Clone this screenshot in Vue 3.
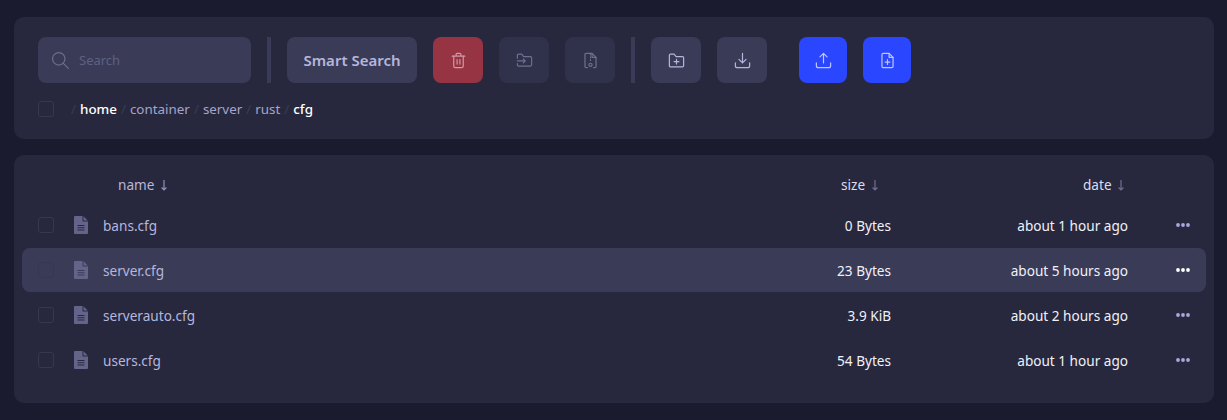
<script setup>
const crumbs = [
  { name: 'home', on: true },
  { name: 'container' },
  { name: 'server' },
  { name: 'rust' },
  { name: 'cfg', on: true }
]

const files = [
  { name: 'bans.cfg', size: '0 Bytes', date: 'about 1 hour ago' },
  { name: 'server.cfg', size: '23 Bytes', date: 'about 5 hours ago', hover: true },
  { name: 'serverauto.cfg', size: '3.9 KiB', date: 'about 2 hours ago' },
  { name: 'users.cfg', size: '54 Bytes', date: 'about 1 hour ago' }
]

const heads = [
  { label: 'name', cls: 'head-name' },
  { label: 'size', cls: 'head-size' },
  { label: 'date', cls: 'head-date' }
]
</script>

<template>
  <div class="page">
    <section class="panel toolbar">
      <div class="actions">
        <label class="search">
          <svg class="search-icon" viewBox="0 0 24 24" fill="none" stroke="currentColor" stroke-width="1.5" stroke-linecap="round">
            <circle cx="10.500" cy="10.500" r="7.500" />
            <path d="M16 16l6 6" />
          </svg>
          <span>Search</span>
        </label>
        <i class="divider"></i>
        <button class="btn smart">Smart Search</button>
        <button class="btn danger">
          <svg viewBox="0 0 24 24" fill="none" stroke="currentColor" stroke-width="1.5" stroke-linecap="round" stroke-linejoin="round">
            <path d="M4 6.500h16M9 6.500V4.200c0-.6.500-1.200 1.200-1.200h3.600c.7 0 1.200.6 1.200 1.200v2.300" />
            <path d="M6 6.500V19c0 1.200.9 2 2 2h8c1.100 0 2-.8 2-2V6.500M10.200 11v5.500M13.800 11v5.500" />
          </svg>
        </button>
        <button class="btn off">
          <svg viewBox="0 0 24 24" fill="none" stroke="currentColor" stroke-width="1.5" stroke-linecap="round" stroke-linejoin="round">
            <path d="M3 9V5.500C3 4.700 3.700 4 4.500 4h4l2.500 3h8.500c.8 0 1.500.7 1.500 1.500v9c0 .8-.7 1.500-1.500 1.500H4.500C3.700 19 3 18.300 3 17.500V16" />
            <path d="M3 12.500h10M10.500 10l2.500 2.500L10.500 15" />
          </svg>
        </button>
        <button class="btn off">
          <svg viewBox="0 0 24 24" fill="none" stroke="currentColor" stroke-width="1.5" stroke-linecap="round" stroke-linejoin="round">
            <path d="M8 21H6.500C5.700 21 5 20.300 5 19.500v-15C5 3.700 5.700 3 6.500 3H14l5 5v11.500c0 .8-.7 1.500-1.500 1.500H16" />
            <path d="M14 3v5h5M12 4v1M12 7.500v1M12 11v1" />
            <circle cx="12" cy="17.500" r="2" />
          </svg>
        </button>
        <i class="divider"></i>
        <button class="btn">
          <svg viewBox="0 0 24 24" fill="none" stroke="currentColor" stroke-width="1.5" stroke-linecap="round" stroke-linejoin="round">
            <path d="M3 5.500C3 4.700 3.700 4 4.500 4h4.500l2.500 3h8c.8 0 1.500.7 1.500 1.500v10c0 .8-.7 1.500-1.500 1.500h-15C3.700 20 3 19.300 3 18.500z" />
            <path d="M12 10.500v6M9 13.500h6" />
          </svg>
        </button>
        <button class="btn">
          <svg viewBox="0 0 24 24" fill="none" stroke="currentColor" stroke-width="1.5" stroke-linecap="round" stroke-linejoin="round">
            <path d="M12 3v12M7.500 10.500L12 15l4.500-4.500" />
            <path d="M3 15v3.500C3 19.900 4.100 21 5.500 21h13c1.400 0 2.500-1.100 2.500-2.500V15" />
          </svg>
        </button>
        <button class="btn primary first">
          <svg viewBox="0 0 24 24" fill="none" stroke="currentColor" stroke-width="1.5" stroke-linecap="round" stroke-linejoin="round">
            <path d="M12 15V3M7.500 7.500L12 3l4.500 4.500" />
            <path d="M3 15v3.500C3 19.900 4.100 21 5.500 21h13c1.400 0 2.500-1.100 2.500-2.500V15" />
          </svg>
        </button>
        <button class="btn primary">
          <svg viewBox="0 0 24 24" fill="none" stroke="currentColor" stroke-width="1.5" stroke-linecap="round" stroke-linejoin="round">
            <path d="M14 3H6.500C5.700 3 5 3.700 5 4.500v15c0 .8.700 1.500 1.500 1.500h11c.8 0 1.500-.7 1.500-1.500V8z" />
            <path d="M14 3v5h5M12 11v6M9 14h6" />
          </svg>
        </button>
      </div>
      <div class="crumbs">
        <span class="check"></span>
        <nav class="path">
          <template v-for="c in crumbs" :key="c.name">
            <span class="slash">/</span>
            <span :class="{ on: c.on }">{{ c.name }}</span>
          </template>
        </nav>
      </div>
    </section>

    <section class="panel listing">
      <div class="head">
        <span v-for="h in heads" :key="h.label" :class="h.cls">
          {{ h.label }}
          <svg class="arrow" viewBox="0 0 6 11" fill="none" stroke="currentColor" stroke-width="1.200">
            <path d="M3 0v10M.6 7.500L3 10l2.400-2.500" />
          </svg>
        </span>
      </div>
      <div v-for="f in files" :key="f.name" class="row" :class="{ hover: f.hover }">
        <span class="check"></span>
        <svg class="file" viewBox="0 0 14 18" fill="currentColor">
          <path fill-rule="evenodd" d="M1 0h7.500v5.500H14V17a1 1 0 0 1-1 1H1a1 1 0 0 1-1-1V1a1 1 0 0 1 1-1zM3.500 9v1h7V9zm0 2.200v1h7v-1zm0 2.200v1h7v-1z" />
          <path d="M9.500 0.300L13.700 4.500H9.500z" />
        </svg>
        <span class="name">{{ f.name }}</span>
        <span class="size">{{ f.size }}</span>
        <span class="date">{{ f.date }}</span>
        <svg class="more" viewBox="0 0 14 4" fill="currentColor">
          <circle cx="2" cy="2" r="1.900" />
          <circle cx="7" cy="2" r="1.900" />
          <circle cx="12" cy="2" r="1.900" />
        </svg>
      </div>
    </section>
  </div>
</template>

<style scoped>
.page {
  height: 420px;
  box-sizing: border-box;
  padding: 17px 13px 0 14px;
  display: flex;
  flex-direction: column;
  gap: 16px;
  font-family: "Noto Sans", "Open Sans", sans-serif;
  font-size: 13.6px;
  color: #b6b6dc;
}

.panel {
  background: #27283d;
  border-radius: 10px;
}

.toolbar {
  height: 122px;
  box-sizing: border-box;
  padding: 20px 24px 0;
}

.actions {
  display: flex;
  align-items: center;
  gap: 16px;
  height: 46px;
}

.search {
  width: 213px;
  height: 46px;
  box-sizing: border-box;
  padding-left: 12px;
  display: flex;
  align-items: center;
  gap: 9px;
  background: #3a3b57;
  border-radius: 8px;
  color: #5f6082;
  font-size: 13px;
}

.search-icon {
  width: 20px;
  height: 20px;
  color: #6c6d90;
}

.divider {
  width: 4px;
  height: 46px;
  background: #3a3b57;
}

.btn {
  width: 50px;
  height: 46px;
  padding: 0;
  border: 0;
  border-radius: 8px;
  background: #3a3b57;
  color: #b6b6dc;
  display: flex;
  align-items: center;
  justify-content: center;
  font: inherit;
}

.btn svg {
  width: 19px;
  height: 19px;
}

.smart {
  width: 130px;
  font-size: 15px;
  font-weight: 600;
}

.danger {
  background: #973443;
  color: #cf9aa6;
}

.off {
  background: #30314a;
  color: #6f7091;
}

.primary {
  width: 48px;
  background: #2a46ff;
  color: #c0c6ff;
}

.first {
  margin-left: 16px;
}

.crumbs {
  display: flex;
  align-items: center;
  margin-top: 18px;
  height: 16px;
}

.check {
  width: 16px;
  height: 16px;
  box-sizing: border-box;
  border: 1px solid #37384f;
  border-radius: 3px;
  flex: none;
}

.path {
  margin-left: 17px;
  display: flex;
  gap: 4px;
  font-size: 13.4px;
  color: #a5a5cb;
}

.path .on {
  color: #fff;
  font-weight: 500;
}

.slash {
  color: #3a3b57;
}

.listing {
  height: 248px;
  box-sizing: border-box;
  padding: 8px;
}

.head {
  display: flex;
  align-items: center;
  height: 40px;
  box-sizing: border-box;
  padding-top: 3px;
}

.arrow {
  width: 6px;
  height: 11px;
  margin-left: 3px;
  vertical-align: -1px;
  color: #6f7091;
}

.head-name {
  margin-left: 96px;
  width: 723px;
  flex: none;
}

.head-name .arrow {
  color: #9090b8;
}

.head-size {
  width: 242px;
  flex: none;
  color: #dcdcf0;
}

.head-date {
  color: #dcdcf0;
}

.row {
  display: flex;
  align-items: center;
  height: 44px;
  margin-bottom: 1px;
  padding-left: 16px;
  border-radius: 8px;
}

.row.hover {
  background: #3a3b57;
}

.file {
  width: 14px;
  height: 18px;
  margin-left: 20px;
  flex: none;
  color: #64648a;
}

.name {
  margin-left: 15px;
  width: 200px;
  flex: none;
}

.size {
  margin-left: 448px;
  width: 140px;
  text-align: right;
  color: #f0f0fa;
  flex: none;
}

.date {
  width: 237px;
  text-align: right;
  color: #f0f0fa;
  flex: none;
}

.more {
  width: 14px;
  height: 4px;
  margin-left: 48px;
  color: #a9a9dc;
  flex: none;
}

.row.hover .more {
  color: #fff;
}
</style>

<style>
body {
  background: #1a1b2e;
  overflow: hidden;
}
</style>
